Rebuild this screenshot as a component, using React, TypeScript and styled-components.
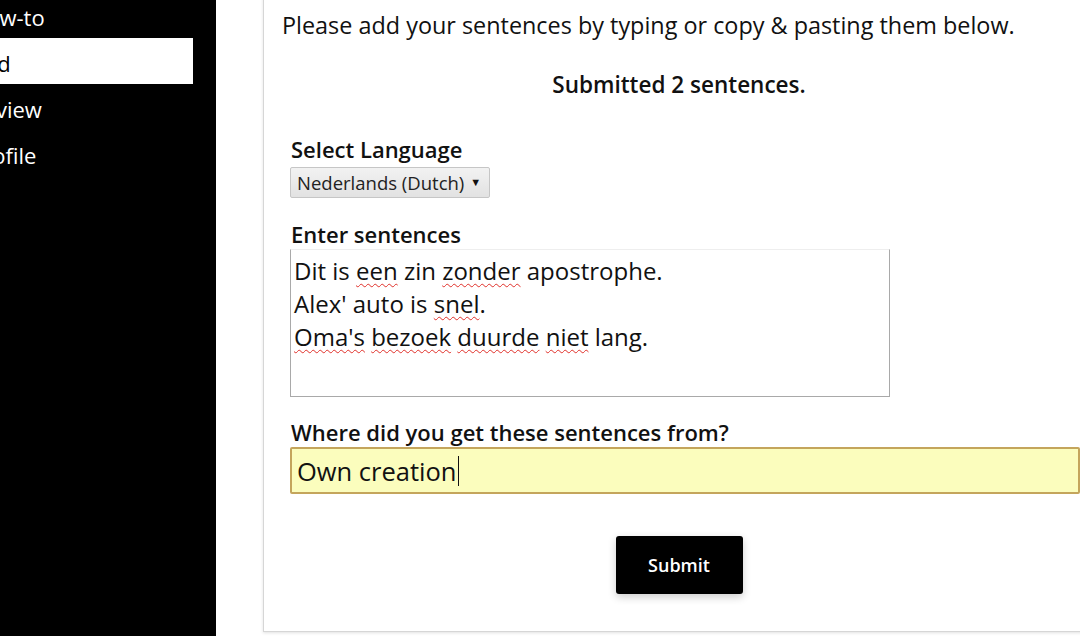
import styled, { createGlobalStyle } from 'styled-components';

const GlobalStyle = createGlobalStyle`
  html, body {
    margin: 0;
    padding: 0;
    background: #ffffff;
    overflow: hidden;
  }
  body {
    font-family: 'Open Sans', 'Noto Sans', sans-serif;
    color: #111111;
  }
`;

const Page = styled.div`
  display: flex;
  height: 636px;
  width: 1080px;
  overflow: hidden;
`;

const Sidebar = styled.nav`
  flex: 0 0 216px;
  background: #000000;
  overflow: hidden;
`;

const NavList = styled.ul`
  list-style: none;
  margin: -8px 23px 0 -40px;
  padding: 0;
`;

interface INavItem {
  active?: boolean;
}

const NavItem = styled.li<INavItem>`
  height: 46px;
  line-height: 50px;
  padding-left: 10px;
  font-size: 22px;
  white-space: nowrap;
  overflow: hidden;
  color: ${(props) => (props.active ? '#000000' : '#ffffff')};
  background: ${(props) => (props.active ? '#ffffff' : 'transparent')};
`;

const Main = styled.main`
  flex: 1;
  padding-left: 47px;
  min-width: 0;
`;

const Card = styled.section`
  box-sizing: border-box;
  width: 832px;
  margin-top: -10px;
  padding: 20px 18px 37px 18px;
  border: 1px solid #d6d6d6;
  box-shadow: 0 1px 3px rgba(0, 0, 0, 0.12);
  background: #ffffff;
`;

const Intro = styled.p`
  margin: 0;
  font-size: 23.4px;
  line-height: 28px;
  white-space: nowrap;
`;

const Status = styled.p`
  margin: 32px 0 0 0;
  text-align: center;
  font-size: 22.5px;
  font-weight: 600;
  line-height: 28px;
`;

const Form = styled.form`
  display: flex;
  flex-direction: column;
  align-items: flex-start;
  padding-left: 8px;
  margin-top: 35px;
`;

interface ILabel {
  gap?: number;
}

const Label = styled.label<ILabel>`
  display: block;
  font-size: 22px;
  font-weight: 600;
  line-height: 30px;
  margin-top: ${(props) => props.gap ?? 0}px;
  margin-left: 1px;
  white-space: nowrap;
`;

const SelectBox = styled.div`
  box-sizing: border-box;
  display: flex;
  align-items: center;
  gap: 6px;
  height: 31px;
  margin-top: 3px;
  padding: 0 8px 0 6px;
  font-size: 18.5px;
  color: #222222;
  background: linear-gradient(#f2f2f2, #e2e2e2);
  border: 1px solid #c6c6c6;
  border-radius: 2px;
`;

const Arrow = styled.span`
  font-size: 11px;
  color: #111111;
  margin-top: -3px;
`;

const TextBox = styled.div`
  box-sizing: border-box;
  width: 600px;
  height: 148px;
  padding: 4px 3px;
  font-size: 24px;
  line-height: 33px;
  color: #111111;
  border: 1px solid #a9a9a9;
  border-top-color: #eeeeee;
`;

const Misspelled = styled.span`
  text-decoration: underline wavy #e0302a;
  text-decoration-thickness: 1px;
  text-underline-offset: 3px;
`;

const InputBox = styled.div`
  box-sizing: border-box;
  display: flex;
  align-items: center;
  width: 790px;
  height: 47px;
  padding: 0 5px;
  font-size: 25.5px;
  color: #111111;
  background: #fbfdbd;
  border: 2px solid #c4a55c;
  border-radius: 2px;
`;

const Caret = styled.span`
  display: inline-block;
  width: 1px;
  height: 30px;
  background: #111111;
  margin-left: 1px;
`;

const Actions = styled.div`
  display: flex;
  justify-content: center;
  margin-top: 42px;
`;

const SubmitButton = styled.button`
  width: 127px;
  height: 58px;
  border: none;
  border-radius: 3px;
  background: #000000;
  color: #ffffff;
  font-family: 'Open Sans', sans-serif;
  font-size: 18px;
  font-weight: 600;
  box-shadow: 0 3px 8px rgba(0, 0, 0, 0.2);
`;

const navItems = ['How-to', 'Add', 'Review', 'Profile'];

const lines: { text: string; wrong?: boolean }[][] = [
  [
    { text: 'Dit is ' },
    { text: 'een', wrong: true },
    { text: ' zin ' },
    { text: 'zonder', wrong: true },
    { text: ' apostrophe.' },
  ],
  [{ text: "Alex' auto is " }, { text: 'snel', wrong: true }, { text: '.' }],
  [
    { text: "Oma's", wrong: true },
    { text: ' ' },
    { text: 'bezoek', wrong: true },
    { text: ' ' },
    { text: 'duurde', wrong: true },
    { text: ' ' },
    { text: 'niet', wrong: true },
    { text: ' lang.' },
  ],
];

export default function App() {
  return (
    <>
      <GlobalStyle />
      <Page>
        <Sidebar>
          <NavList>
            {navItems.map((item) => (
              <NavItem key={item} active={item === 'Add'}>
                {item}
              </NavItem>
            ))}
          </NavList>
        </Sidebar>
        <Main>
          <Card>
            <Intro>Please add your sentences by typing or copy &amp; pasting them below.</Intro>
            <Status>Submitted 2 sentences.</Status>
            <Form onSubmit={(e) => e.preventDefault()}>
              <Label>Select Language</Label>
              <SelectBox>
                Nederlands (Dutch)
                <Arrow>▼</Arrow>
              </SelectBox>
              <Label gap={21}>Enter sentences</Label>
              <TextBox>
                {lines.map((line, i) => (
                  <div key={i}>
                    {line.map((part, j) =>
                      part.wrong ? <Misspelled key={j}>{part.text}</Misspelled> : <span key={j}>{part.text}</span>
                    )}
                  </div>
                ))}
              </TextBox>
              <Label gap={20}>Where did you get these sentences from?</Label>
              <InputBox>
                Own creation
                <Caret />
              </InputBox>
            </Form>
            <Actions>
              <SubmitButton type="submit">Submit</SubmitButton>
            </Actions>
          </Card>
        </Main>
      </Page>
    </>
  );
}
